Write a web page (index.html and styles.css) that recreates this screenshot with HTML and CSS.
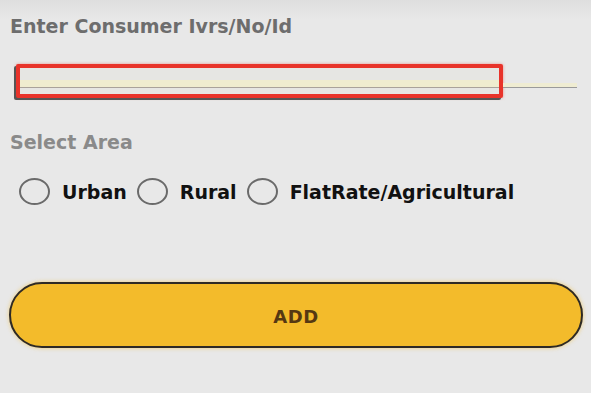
FILE: index.html
```html
<!DOCTYPE html>
<html lang="en">
<head>
  <meta charset="UTF-8" />
  <meta name="viewport" content="width=device-width, initial-scale=1.0"/>
  <title>Add Consumer</title>
  <link rel="stylesheet" href="styles.css">
</head>
<body>
  <div class="screen">
    <label class="field-label" for="consumerId">Enter Consumer Ivrs/No/Id</label>

    <div class="input-row">
      <div class="input-focus">
        <input type="text" id="consumerId" class="input">
      </div>
      <div class="input-line"></div>
    </div>

    <div class="field-label area-label">Select Area</div>

    <div class="radio-group">
      <label class="radio"><span class="circle"></span>Urban</label>
      <label class="radio"><span class="circle"></span>Rural</label>
      <label class="radio"><span class="circle"></span>FlatRate/Agricultural</label>
    </div>

    <button class="add-button">ADD</button>
  </div>
</body>
</html>
```

FILE: styles.css
```css
* {
  box-sizing: border-box;
}
body {
  margin: 0;
  font-family: 'DejaVu Sans', 'Liberation Sans', sans-serif;
  background: linear-gradient(180deg, #dedede 0, #e8e8e8 20px, #e8e8e8 100%);
  width: 591px;
  height: 393px;
  overflow: hidden;
}
.screen {
  padding: 15px 9px 0 9px;
}
.field-label {
  display: block;
  font-size: 19px;
  font-weight: bold;
  color: #6d6d6d;
  padding-left: 1px;
  line-height: 22px;
}
.input-row {
  display: flex;
  align-items: flex-end;
  margin-top: 27px;
  padding-left: 7px;
}
.input-focus {
  width: 487px;
  height: 34px;
  border: 4px solid #e8332a;
  border-radius: 2px;
  box-shadow: -2px 2px 0 #555, 0 0 3px rgba(232, 51, 42, 0.5);
  background: #e6e6e3;
  padding-top: 12px;
}
.input {
  display: block;
  width: 100%;
  height: 8px;
  border: none;
  border-bottom: 1px solid #a9a29a;
  background: #efeccf;
  outline: none;
  padding: 0;
}
.input-line {
  width: 74px;
  height: 5px;
  margin-bottom: 10px;
  background: #efecd2;
  border-bottom: 1px solid #9a9a9a;
}
.area-label {
  margin-top: 33px;
  color: #8a8a8a;
}
.radio-group {
  display: flex;
  align-items: center;
  margin-top: 25px;
  padding-left: 10px;
}
.radio {
  display: flex;
  align-items: center;
  font-size: 19px;
  font-weight: bold;
  color: #111;
  margin-right: 10px;
}
.circle {
  width: 31px;
  height: 27px;
  border: 2.5px solid #6a6a6a;
  border-radius: 50%;
  margin-right: 12px;
}
.add-button {
  display: block;
  width: 574px;
  height: 66px;
  margin-top: 77px;
  background: #f3bb2b;
  border: 2px solid #2e2a25;
  border-radius: 33px;
  box-shadow: 0 0 4px rgba(243, 187, 43, 0.6);
  font-family: 'DejaVu Sans', 'Liberation Sans', sans-serif;
  font-size: 18px;
  font-weight: bold;
  color: #553812;
  letter-spacing: 0.5px;
  padding-top: 4px;
  cursor: pointer;
}
```
